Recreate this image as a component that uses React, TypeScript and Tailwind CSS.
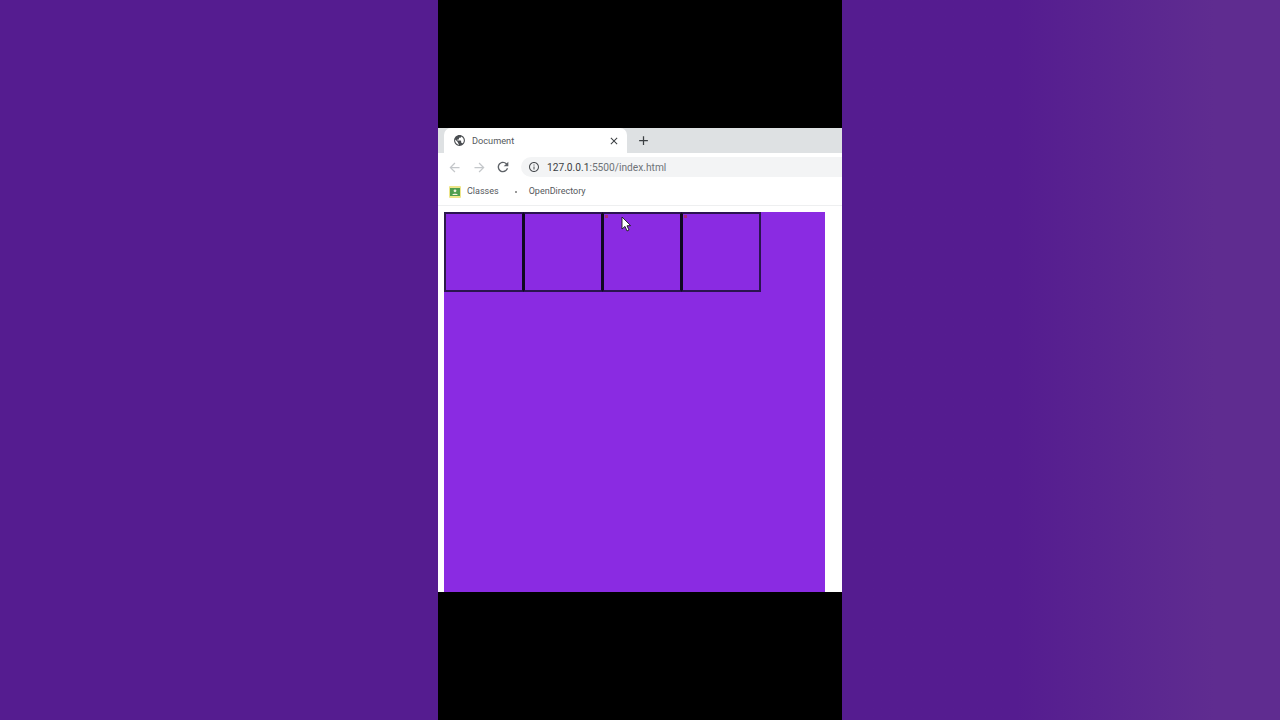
import { MdAdd, MdArrowBack, MdArrowForward, MdClose, MdInfoOutline, MdPublic, MdRefresh } from "react-icons/md";

const font = { fontFamily: '"Roboto", "Liberation Sans", sans-serif' };

function ClassesIcon() {
  return (
    <svg viewBox="0 0 12 12" className="h-3 w-3 shrink-0">
      <rect x="0" y="0" width="12" height="12" rx="1" fill="#eee58a" />
      <rect x="1" y="2" width="10" height="8" fill="#4f9e4f" />
      <circle cx="6" cy="4.8" r="1.4" fill="#f2f2e0" />
      <path d="M3.2 9 C3.4 7.2 8.6 7.2 8.8 9 Z" fill="#f2f2e0" />
    </svg>
  );
}

function Cursor() {
  return (
    <svg viewBox="0 0 10 16" className="absolute left-[177px] top-[4px] h-4 w-[10px]">
      <path d="M1 1 L1 13 L4 10.4 L6 15 L8 14 L6 9.8 L9.6 9.6 Z" fill="#fff" stroke="#1a1a1a" strokeWidth="0.9" />
    </svg>
  );
}

export default function App() {
  return (
    <div className="flex h-[720px] w-[1280px] overflow-hidden bg-black" style={font}>
      <div className="w-[438px] shrink-0 bg-[#551c90]" />

      <div className="flex w-[404px] shrink-0 flex-col justify-center">
        <div className="flex h-[464px] flex-col bg-white">
          {/* tab strip */}
          <div className="flex h-[25px] shrink-0 items-stretch bg-[#dee1e3] pl-[6px]">
            <div className="flex w-[183px] items-center rounded-t-[7px] bg-white pl-[9px] pr-[7px]">
              <MdPublic className="h-[13px] w-[13px] text-[#4a4d51]" />
              <span className="ml-[6px] flex-1 pt-px text-[9.2px] text-[#55585c]">Document</span>
              <MdClose className="h-3 w-3 text-[#3c4043]" />
            </div>
            <div className="ml-[9px] flex items-center">
              <MdAdd className="h-[15px] w-[15px] text-[#3c4043]" />
            </div>
          </div>

          {/* toolbar */}
          <div className="flex h-[28px] shrink-0 items-center pl-[9px]">
            <MdArrowBack className="h-[15px] w-[15px] text-[#c4c7ca]" />
            <MdArrowForward className="ml-[10px] h-[15px] w-[15px] text-[#c4c7ca]" />
            <MdRefresh className="ml-[8px] h-4 w-4 text-[#5f6368]" />
            <div className="ml-[10px] flex h-[20px] flex-1 items-center rounded-l-full bg-[#f3f4f5] pl-[7px]">
              <MdInfoOutline className="h-3 w-3 text-[#4a4d51]" />
              <span className="ml-[7px] pt-px text-[10.2px] text-[#6f7378]">
                <span className="text-[#3c4043]">127.0.0.1</span>:5500/index.html
              </span>
            </div>
          </div>

          {/* bookmarks */}
          <div className="flex h-[25px] shrink-0 items-center border-b border-[#eeeff0] pb-[2px] pl-[11px] text-[9px] text-[#55585c]">
            <ClassesIcon />
            <span className="ml-[6px]">Classes</span>
            <span className="ml-[16px] h-[2px] w-[2px] rounded-full bg-[#777]" />
            <span className="ml-[12px]">OpenDirectory</span>
          </div>

          {/* page */}
          <div className="flex min-h-0 flex-1 pl-[6px] pr-[17px] pt-[6px]">
            <div className="relative flex-1 bg-[#8a2be2]">
              <div className="flex items-start">
                {[0, 1, 2, 3].map((i) => (
                  <div key={i} className="relative -mr-px h-20 w-20 border-2 border-y-[#2a1450] border-l-[#0f0820] border-r-[#0f0820] first:border-l-[#2d1a4a] last:border-r-[#2a1450]">
                    {i > 1 && <span className="absolute left-px top-px h-[3px] w-[3px] bg-[#a62a78]" />}
                  </div>
                ))}
              </div>
              <Cursor />
            </div>
          </div>
        </div>
      </div>

      <div className="flex-1 bg-gradient-to-r from-[#551c90] from-40% to-[#5f2c90] to-85%" />
    </div>
  );
}
